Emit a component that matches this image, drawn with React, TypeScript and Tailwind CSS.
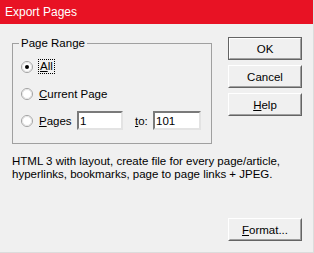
import type { ReactNode } from "react";

function Radio({ checked }: { checked?: boolean }) {
  return (
    <svg width="12" height="12" viewBox="0 0 12 12" className="shrink-0">
      <circle cx="6" cy="6" r="5.5" fill="#ffffff" stroke="#a0a0a0" />
      <circle cx="6" cy="6" r="4.5" fill="#ffffff" stroke="#e3e3e3" />
      {checked && <circle cx="6" cy="6" r="2" fill="#000000" />}
    </svg>
  );
}

function Btn({ children, primary }: { children: ReactNode; primary?: boolean }) {
  return (
    <button
      type="button"
      className={
        primary
          ? "w-[74px] h-[23px] border border-[#646464] bg-[#f0f0f0] flex"
          : "w-[74px] h-[23px] border border-t-white border-l-white border-b-[#646464] border-r-[#646464] bg-[#f0f0f0] flex"
      }
    >
      <span
        className={
          primary
            ? "flex-1 flex items-center justify-center border border-t-white border-l-white border-b-[#a0a0a0] border-r-[#a0a0a0]"
            : "flex-1 flex items-center justify-center border border-t-[#f0f0f0] border-l-[#f0f0f0] border-b-[#a0a0a0] border-r-[#a0a0a0]"
        }
      >
        {children}
      </span>
    </button>
  );
}

const field =
  "h-[19px] bg-white border-2 border-t-[#7a7a7a] border-l-[#7a7a7a] border-b-[#e3e3e3] border-r-[#e3e3e3] pl-[1px] flex items-center";

export default function App() {
  return (
    <div className="w-[314px] h-[253px] bg-[#f0f0f0] flex flex-col font-['Liberation_Sans',Arial,sans-serif] text-[11.5px] leading-[14px] text-black border-r border-b border-[#dcdcdc]">
      <div className="h-[24px] shrink-0 bg-[#e81224] text-white text-[12px] pl-[5px] flex items-center">Export Pages</div>
      <div className="flex-1 flex flex-col pl-[12px] pr-[11px] pt-[12px] pb-[11px]">
        <div className="flex justify-between">
          <fieldset className="w-[200px] h-[108px] border border-[#a0a0a0] pl-[8px] pr-0 pb-0 pt-[7px] m-0 flex flex-col gap-[8px]">
            <legend className="px-[2px] -ml-[2px]">Page Range</legend>
            <div className="h-[19px] flex items-center gap-[5px]">
              <Radio checked />
              <span className="border border-dotted border-black px-[1px] leading-[13px]">
                <u>A</u>ll
              </span>
            </div>
            <div className="h-[19px] flex items-center gap-[6px]">
              <Radio />
              <span>
                <u>C</u>urrent Page
              </span>
            </div>
            <div className="h-[19px] flex items-center">
              <Radio />
              <span className="ml-[6px] w-[38px]">
                <u>P</u>ages
              </span>
              <div className={field + " w-[46px]"}>1</div>
              <span className="ml-[12px] w-[18px]">
                <u>t</u>o:
              </span>
              <div className={field + " w-[48px]"}>101</div>
            </div>
          </fieldset>
          <div className="flex flex-col gap-[5px] pt-[1px]">
            <Btn primary>OK</Btn>
            <Btn>Cancel</Btn>
            <Btn>
              <u>H</u>elp
            </Btn>
          </div>
        </div>
        <p className="mt-[11px] leading-[13px]">
          HTML 3 with layout, create file for every page/article,
          <br />
          hyperlinks, bookmarks, page to page links + JPEG.
        </p>
        <div className="mt-auto self-end">
          <Btn>
            <u>F</u>ormat...
          </Btn>
        </div>
      </div>
    </div>
  );
}
